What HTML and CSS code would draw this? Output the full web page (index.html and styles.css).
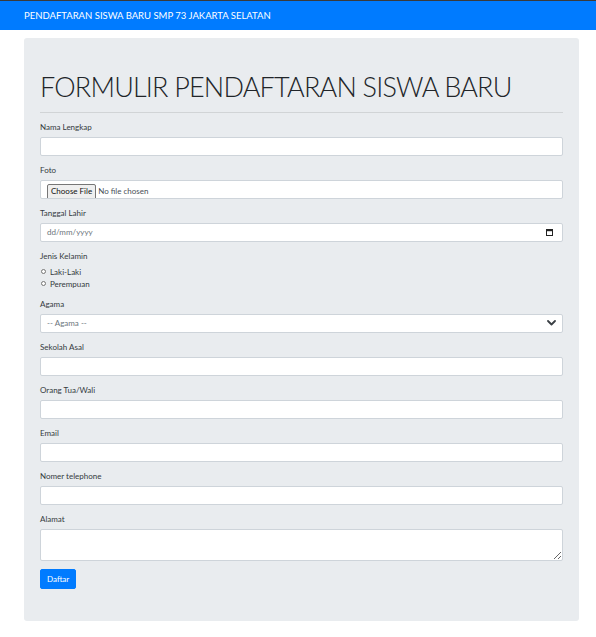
FILE: index.html
```html
<!DOCTYPE html>
<html lang="id">
<head>
<meta charset="utf-8">
<title>Pendaftaran Siswa Baru</title>
<link rel="stylesheet" href="styles.css">
</head>
<body>
<nav class="navbar">
  <span class="brand">PENDAFTARAN SISWA BARU SMP 73 JAKARTA SELATAN</span>
</nav>
<main class="jumbotron">
  <h1 class="display">FORMULIR PENDAFTARAN SISWA BARU</h1>
  <hr class="divider">
  <form class="form">
    <div class="form-group">
      <label class="label" for="nama">Nama Lengkap</label>
      <input class="form-control" id="nama" type="text">
    </div>
    <div class="form-group">
      <label class="label">Foto</label>
      <div class="form-control file-control">
        <span class="file-btn">Choose File</span><span class="file-text">No file chosen</span>
      </div>
    </div>
    <div class="form-group">
      <label class="label">Tanggal Lahir</label>
      <div class="form-control fake-control">
        <span class="muted">dd/mm/yyyy</span>
        <svg class="cal-icon" width="7" height="7" viewBox="0 0 7 7" aria-hidden="true">
          <rect x="0.5" y="0.5" width="6" height="6" fill="none" stroke="#222" stroke-width="1"/>
          <rect x="0" y="0" width="7" height="2.2" fill="#222"/>
        </svg>
      </div>
    </div>
    <div class="form-group">
      <label class="label">Jenis Kelamin</label>
      <div class="form-check">
        <input class="radio" type="radio" name="jk" id="jk1">
        <label class="check-label" for="jk1">Laki-Laki</label>
      </div>
      <div class="form-check">
        <input class="radio" type="radio" name="jk" id="jk2">
        <label class="check-label" for="jk2">Perempuan</label>
      </div>
    </div>
    <div class="form-group">
      <label class="label">Agama</label>
      <div class="form-control fake-control">
        <span class="muted">-- Agama --</span>
        <svg class="chev-icon" width="9" height="6" viewBox="0 0 9 6" aria-hidden="true">
          <polyline points="1,1 4.5,4.5 8,1" fill="none" stroke="#3a3f44" stroke-width="1.8" stroke-linecap="round" stroke-linejoin="round"/>
        </svg>
      </div>
    </div>
    <div class="form-group">
      <label class="label" for="sekolah">Sekolah Asal</label>
      <input class="form-control" id="sekolah" type="text">
    </div>
    <div class="form-group">
      <label class="label" for="ortu">Orang Tua/Wali</label>
      <input class="form-control" id="ortu" type="text">
    </div>
    <div class="form-group">
      <label class="label" for="email">Email</label>
      <input class="form-control" id="email" type="text">
    </div>
    <div class="form-group">
      <label class="label" for="telp">Nomer telephone</label>
      <input class="form-control" id="telp" type="text">
    </div>
    <div class="form-group">
      <label class="label" for="alamat">Alamat</label>
      <textarea class="form-control textarea" id="alamat" rows="2"></textarea>
    </div>
    <div class="actions">
      <button class="btn" type="button">Daftar</button>
    </div>
  </form>
</main>
</body>
</html>
```
FILE: styles.css
```css
* { box-sizing: border-box; }
html, body { margin: 0; padding: 0; }
body {
  font-family: "Segoe UI", Lato, "Open Sans", sans-serif;
  font-size: 8px;
  line-height: 12px;
  color: #343a40;
  background: #fff;
}
.navbar {
  height: 30px;
  border-top: 1px solid #3a3a3a;
  background: #007bff;
  display: flex;
  align-items: center;
  padding-left: 24px;
}
.brand {
  color: #fff;
  font-size: 9.5px;
  line-height: 15px;
}
.jumbotron {
  margin: 8px 17px 16px 24px;
  background: #e9ecef;
  border-radius: 3px;
  padding: 32px 16px;
}
.display {
  font-size: 27px;
  font-weight: 300;
  line-height: 33.6px;
  letter-spacing: -0.8px;
  color: #212529;
  margin: 0 0 4px;
}
.divider {
  margin: 8px 0;
  border: 0;
  border-top: 1px solid rgba(0,0,0,.1);
}
.form { margin: 0; }
.form-group { margin-bottom: 8px; }
.label {
  display: inline-block;
  margin-bottom: 4px;
}
.form-control {
  display: block;
  width: 100%;
  height: 19px;
  padding: 3px 6px;
  font-family: inherit;
  font-size: 8px;
  line-height: 12px;
  color: #495057;
  background: #fff;
  border: 1px solid #ced4da;
  border-radius: 2px;
  margin: 0;
}
.file-control {
  overflow: hidden;
  white-space: nowrap;
  display: flex;
  align-items: flex-start;
}
.file-btn {
  display: inline-block;
  height: 17px;
  padding: 1px 3px;
  color: #111;
  background: #efefef;
  border: 1px solid #767676;
  border-radius: 2px;
  line-height: 11px;
}
.file-text {
  margin-left: 2px;
  line-height: 14px;
  color: #495057;
}
.fake-control {
  display: flex;
  align-items: center;
  justify-content: space-between;
}
.muted { color: #6c757d; }
.cal-icon { margin-right: 3px; }
.chev-icon { margin-right: 0; }
.form-check {
  display: flex;
  align-items: center;
  height: 12px;
  padding-left: 1px;
}
.radio {
  appearance: none;
  -webkit-appearance: none;
  width: 5px;
  height: 5px;
  margin: 0 4px 0 0;
  border: 1px solid #767676;
  border-radius: 50%;
  background: #fff;
}
.check-label { line-height: 12px; }
.textarea {
  height: 32px;
  resize: vertical;
}
.actions { display: flex; }
.btn {
  display: block;
  height: 20px;
  padding: 3px 6px;
  font-family: inherit;
  font-size: 8px;
  line-height: 12px;
  color: #fff;
  background: #007bff;
  border: 1px solid #007bff;
  border-radius: 2px;
}
```
